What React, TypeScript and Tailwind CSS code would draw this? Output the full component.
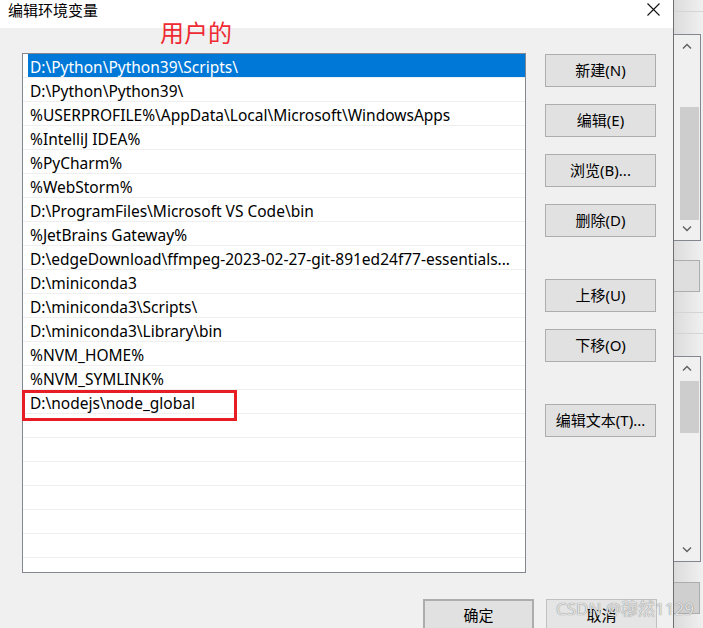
import React from 'react';

const FONT = '"Noto Sans", "Noto Sans CJK SC", sans-serif';

const paths: string[] = [
  'D:\\Python\\Python39\\Scripts\\',
  'D:\\Python\\Python39\\',
  '%USERPROFILE%\\AppData\\Local\\Microsoft\\WindowsApps',
  '%IntelliJ IDEA%',
  '%PyCharm%',
  '%WebStorm%',
  'D:\\ProgramFiles\\Microsoft VS Code\\bin',
  '%JetBrains Gateway%',
  'D:\\edgeDownload\\ffmpeg-2023-02-27-git-891ed24f77-essentials...',
  'D:\\miniconda3',
  'D:\\miniconda3\\Scripts\\',
  'D:\\miniconda3\\Library\\bin',
  '%NVM_HOME%',
  '%NVM_SYMLINK%',
  'D:\\nodejs\\node_global',
];

const rows = [...paths, ...Array(8).fill('')];

const Button: React.FC<{ label: string; className?: string }> = ({ label, className = '' }) => (
  <div
    className={`w-[111px] h-[33px] shrink-0 flex items-center justify-center bg-[#e1e1e1] border border-[#adadad] text-[15px] text-black ${className}`}
  >
    {label}
  </div>
);

const Chevron: React.FC<{ up?: boolean }> = ({ up }) => (
  <svg width="10" height="6" viewBox="0 0 10 6" className="mx-auto shrink-0">
    <path
      d={up ? 'M1 5.5 L5 1.5 L9 5.5' : 'M1 0.5 L5 4.5 L9 0.5'}
      fill="none"
      stroke="#606060"
      strokeWidth="1.4"
    />
  </svg>
);

const BgScrollbar: React.FC<{ height: string; thumbTop: string; thumbHeight: string }> = ({
  height,
  thumbTop,
  thumbHeight,
}) => (
  <div className={`${height} shrink-0 w-[27px] border-y border-r border-[#828790] bg-[#f0f0f0] flex flex-col pt-[8px] pb-[8px]`}>
    <Chevron up />
    <div className="flex-1 flex flex-col items-end pr-[1px]">
      <div className={`${thumbTop} shrink-0`} />
      <div className={`w-[19px] ${thumbHeight} shrink-0 bg-[#cdcdcd]`} />
    </div>
    <Chevron />
  </div>
);

export default function App() {
  return (
    <div className="relative w-[703px] h-[628px] overflow-hidden flex" style={{ fontFamily: FONT }}>
      {/* dialog */}
      <div className="w-[674px] h-full shrink-0 flex flex-col bg-[#f0f0f0] border-r border-[#6e6e6e]">
        <div className="h-[28px] shrink-0 bg-white flex items-start justify-between pl-[8px] pr-[13px]">
          <span className="text-[15px] leading-[20px] text-black">编辑环境变量</span>
          <svg width="13" height="13" viewBox="0 0 13 13" className="mt-[3px]">
            <path d="M0.5 0.5 L12.5 12.5 M12.5 0.5 L0.5 12.5" stroke="#111" strokeWidth="1.1" />
          </svg>
        </div>

        <div className="flex shrink-0 pl-[22px] pt-[25px]">
          {/* list */}
          <div className="w-[504px] h-[520px] shrink-0 border border-[#828790] bg-white overflow-hidden">
            {rows.map((r, i) => (
              <div key={i} className="h-[24px] border-b border-[#efefef] pl-[5px]">
                <div
                  className={`h-[23px] pl-[2px] text-[15.5px] leading-[27px] whitespace-nowrap overflow-hidden ${
                    i === 0 ? 'bg-[#0078d7] text-white' : 'text-black'
                  }`}
                >
                  {r}
                </div>
              </div>
            ))}
          </div>

          {/* buttons */}
          <div className="ml-[19px] flex flex-col pt-[1px]">
            <Button label="新建(N)" />
            <Button label="编辑(E)" className="mt-[17px]" />
            <Button label="浏览(B)..." className="mt-[17px]" />
            <Button label="删除(D)" className="mt-[17px]" />
            <Button label="上移(U)" className="mt-[42px]" />
            <Button label="下移(O)" className="mt-[17px]" />
            <Button label="编辑文本(T)..." className="mt-[42px]" />
          </div>
        </div>

        <div className="flex shrink-0 pl-[423px] pt-[26px] gap-[12px]">
          <Button label="确定" className="border-2 border-[#0078d7] w-[110px]" />
          <Button label="取消" className="bg-[#e5e5e5] border-[#c0c0c0]" />
        </div>
      </div>

      {/* window behind */}
      <div className="flex-1 h-full flex flex-col bg-gradient-to-r from-[#dcdcdc] to-[#f0f0f0]">
        <div className="h-[11px] shrink-0" />
        <div className="h-px shrink-0 bg-[#d4d4d4]" />
        <div className="h-[22px] shrink-0" />
        <BgScrollbar height="h-[207px]" thumbTop="h-[58px]" thumbHeight="h-[113px]" />
        <div className="h-[19px] shrink-0" />
        <div className="h-[32px] shrink-0 w-[26px] border border-l-0 border-[#adadad] bg-[#dedede]" />
        <div className="h-[20px] shrink-0" />
        <div className="h-px shrink-0 bg-[#d4d4d4]" />
        <div className="h-[20px] shrink-0" />
        <div className="h-px shrink-0 bg-[#d4d4d4]" />
        <div className="h-[22px] shrink-0" />
        <BgScrollbar height="h-[206px]" thumbTop="h-[10px]" thumbHeight="h-[52px]" />
        <div className="h-[20px] shrink-0" />
        <div className="h-[32px] shrink-0 w-[26px] border border-l-0 border-[#adadad] bg-[#cfcfcf]" />
      </div>

      {/* annotations */}
      <div className="absolute left-[160px] top-[17px] text-[24px] leading-[32px] text-[#ee2a33]">用户的</div>
      <div className="absolute left-[22px] top-[390px] w-[215px] h-[31px] border-[3px] border-[#e81c24]" />
      <div className="absolute left-[556px] top-[598px] text-[17px] leading-[22px] text-[#e2e2e2] [text-shadow:0_0_1px_#666]">
        CSDN @穆然1129
      </div>
    </div>
  );
}
